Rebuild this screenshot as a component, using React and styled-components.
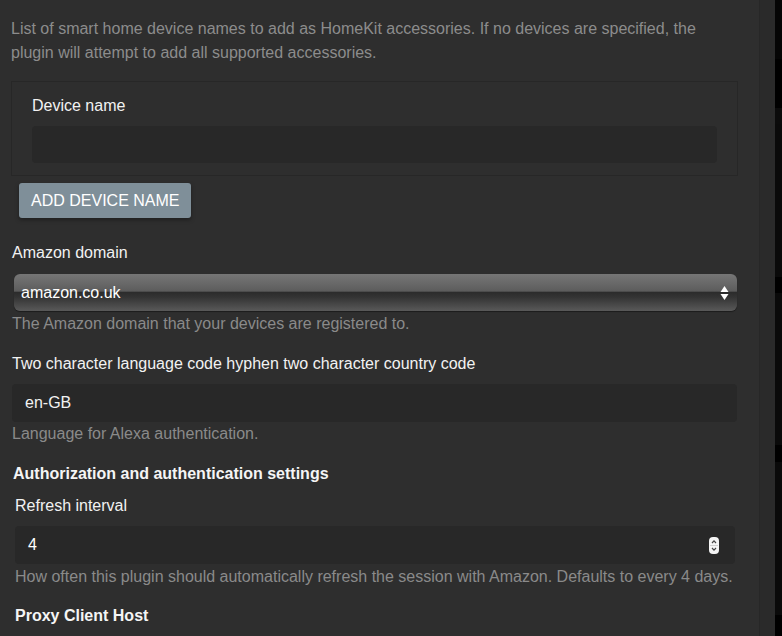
import React from "react";
import styled, { createGlobalStyle } from "styled-components";

const GlobalStyle = createGlobalStyle`
  html, body {
    margin: 0;
    padding: 0;
    background: #2e2e2e;
    height: 636px;
    overflow: hidden;
  }
  body {
    font-family: "Liberation Sans", Arial, Helvetica, sans-serif;
    -webkit-font-smoothing: antialiased;
  }
`;

const Page = styled.div`
  display: flex;
  height: 636px;
  width: 782px;
`;

const Main = styled.div`
  flex: 1;
  background: #2e2e2e;
  padding: 17px 21px 0 11px;
  min-width: 0;
`;

const Gutter = styled.div`
  width: 15px;
  background: #2a2a2a;
  border-left: 1px solid #272727;
`;

const Edge = styled.div`
  width: 7px;
  display: flex;
  flex-direction: column;
`;

const EdgeBand = styled.div`
  background: ${({ $shade }) => $shade};
`;

const Description = styled.p`
  margin: 0;
  font-size: 16px;
  line-height: 24px;
  color: #8c8c8c;
`;

const FieldBox = styled.div`
  margin-top: 16px;
  border: 1px solid #272727;
  padding: 13px 20px 12px 20px;
`;

const Label = styled.div`
  font-size: 16px;
  line-height: 22px;
  color: #f2f2f2;
`;

const Heading = styled.div`
  font-size: 16px;
  line-height: 22px;
  font-weight: 700;
  color: #f5f5f5;
  margin: ${({ $gap }) => $gap}px 0 0 ${({ $inset }) => $inset}px;
`;

const Field = styled.div`
  display: flex;
  align-items: center;
  justify-content: space-between;
  height: ${({ $height }) => $height}px;
  margin-top: 9px;
  padding: 0 ${({ $right }) => $right}px 0 ${({ $left }) => $left}px;
  background: #282828;
  border-radius: 4px;
  color: #f2f2f2;
  font-size: 16px;
`;

const AddButton = styled.button`
  display: block;
  margin: 7px 0 0 8px;
  height: 35px;
  padding: 0 12px;
  border: none;
  border-radius: 3px;
  background: #7f8f99;
  color: #ffffff;
  font-family: inherit;
  font-size: 16px;
  text-transform: uppercase;
  box-shadow: 0 2px 4px rgba(0, 0, 0, 0.35);
`;

const Group = styled.div`
  margin: ${({ $gap }) => $gap}px ${({ $right }) => $right}px 0
    ${({ $left }) => $left}px;
`;

const Help = styled.div`
  margin-top: ${({ $gap }) => $gap}px;
  font-size: 16px;
  line-height: 22px;
  color: #8a8a8a;
  white-space: nowrap;
`;

const Select = styled.div`
  display: flex;
  align-items: center;
  justify-content: space-between;
  height: 36px;
  margin: 10px 0 0 2px;
  padding: 1px 8px 0 7px;
  border-radius: 6px;
  color: #ffffff;
  font-size: 16px;
  background: linear-gradient(
    to bottom,
    #767676 0%,
    #666666 30%,
    #5c5c5c 46%,
    #2c2c2c 50%,
    #333333 62%,
    #4a4a4a 85%,
    #595959 100%
  );
  box-shadow: 0 1px 1px rgba(0, 0, 0, 0.4);
`;

const Value = styled.span`
  color: #ffffff;
`;

const SelectArrows = () => (
  <svg width="9" height="16" viewBox="0 0 9 16">
    <path d="M4.5 1 L8.5 7 L0.5 7 Z" fill="#ffffff" />
    <path d="M4.5 15 L8.5 9 L0.5 9 Z" fill="#ffffff" />
  </svg>
);

const Spinner = () => (
  <svg width="10" height="17" viewBox="0 0 10 17">
    <rect x="0" y="0" width="10" height="17" rx="4" fill="#f4f4f4" />
    <line x1="1" y1="8.5" x2="9" y2="8.5" stroke="#cfcfcf" strokeWidth="1" />
    <path d="M3 6 L5 3.8 L7 6" fill="none" stroke="#444" strokeWidth="1.2" />
    <path d="M3 11 L5 13.2 L7 11" fill="none" stroke="#444" strokeWidth="1.2" />
  </svg>
);

const edgeBands = [
  ["#050505", 59],
  ["#000000", 49],
  ["#0b0b0b", 16],
  ["#0a0a0a", 153],
  ["#000000", 16],
  ["#0a0a0a", 152],
  ["#000000", 17],
  ["#0a0a0a", 153],
  ["#000000", 21],
];

const App = () => {
  return (
    <>
      <GlobalStyle />
      <Page>
        <Main>
          <Description>
            List of smart home device names to add as HomeKit accessories. If
            no devices are specified, the plugin will attempt to add all
            supported accessories.
          </Description>

          <FieldBox>
            <Label>Device name</Label>
            <Field $height={37} $left={12} $right={12} />
          </FieldBox>
          <AddButton>Add device name</AddButton>

          <Group $gap={24} $left={1} $right={1}>
            <Label>Amazon domain</Label>
            <Select>
              <Value>amazon.co.uk</Value>
              <SelectArrows />
            </Select>
            <Help $gap={2}>
              The Amazon domain that your devices are registered to.
            </Help>
          </Group>

          <Group $gap={18} $left={1} $right={1}>
            <Label>
              Two character language code hyphen two character country code
            </Label>
            <Field $height={38} $left={13} $right={12}>
              en-GB
            </Field>
            <Help $gap={1}>Language for Alexa authentication.</Help>
          </Group>

          <Heading $gap={18} $inset={2}>
            Authorization and authentication settings
          </Heading>

          <Group $gap={10} $left={4} $right={3}>
            <Label>Refresh interval</Label>
            <Field $height={38} $left={13} $right={16}>
              <Value>4</Value>
              <Spinner />
            </Field>
            <Help $gap={2}>
              How often this plugin should automatically refresh the session
              with Amazon. Defaults to every 4 days.
            </Help>
          </Group>

          <Heading $gap={17} $inset={4}>
            Proxy Client Host
          </Heading>
        </Main>
        <Gutter />
        <Edge>
          {edgeBands.map(([shade, h], i) => (
            <EdgeBand key={i} $shade={shade} style={{ height: h }} />
          ))}
        </Edge>
      </Page>
    </>
  );
};

export default App;
